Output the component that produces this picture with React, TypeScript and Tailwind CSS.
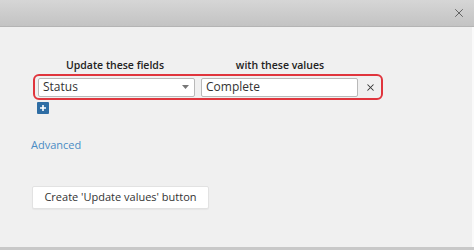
import { X } from 'lucide-react';

export default function App() {
  return (
    <div className="w-[474px] h-[250px] flex flex-col bg-[#f0f0f0] font-['Open_Sans',sans-serif] text-[11px] text-[#333] overflow-hidden">
      {/* title bar */}
      <div className="h-[27px] shrink-0 flex items-center justify-end pr-[8px] bg-gradient-to-b from-[#d6d6d6] to-[#c3c3c3] border-b border-[#b4b4b4]">
        <X className="w-[14px] h-[14px] text-[#555]" strokeWidth={1.5} />
      </div>

      <div className="flex-1 flex flex-col pl-[31px] pt-[31px] border-r-2 border-[#fafafa]">
        <div className="flex pl-[4px] font-semibold text-[10.5px] text-[#222] leading-[14px]">
          <div className="w-[160px] text-center">Update these fields</div>
          <div className="w-[170px] text-center">with these values</div>
        </div>

        <div className="mt-[2px] ml-[2px] w-[350px] h-[26px] flex items-center pl-[3px] border-2 border-[#e0353d] rounded-[6px]">
          <div className="w-[157px] h-[19px] flex items-center justify-between pl-[4px] pr-[5px] bg-white border border-[#b9b9b9] rounded-[2px]">
            <span className="text-[12px]">Status</span>
            <svg width="7" height="4" viewBox="0 0 7 4">
              <path d="M0 0h7L3.5 4z" fill="#777" />
            </svg>
          </div>
          <div className="ml-[6px] w-[157px] h-[19px] flex items-center pl-[4px] bg-white border border-[#b9b9b9] rounded-[2px]">
            <span className="text-[12px]">Complete</span>
          </div>
          <X className="ml-[7px] w-[11px] h-[11px] text-[#333]" strokeWidth={2.2} />
        </div>

        <div className="mt-[2px] ml-[6px] w-[12px] h-[12px] flex items-center justify-center bg-[#2e6da4] rounded-[1px]">
          <svg width="8" height="8" viewBox="0 0 8 8">
            <path d="M4 1v6M1 4h6" stroke="#fff" strokeWidth="1.6" />
          </svg>
        </div>

        <a className="mt-[24px] text-[#4a8cc4] leading-[14px]">Advanced</a>

        <button className="mt-[34px] ml-[1px] w-[177px] h-[23px] bg-white border border-[#e2e2e2] rounded-[2px] text-[#333] text-[11px] shadow-[0_1px_1px_rgba(0,0,0,0.04)]">
          Create 'Update values' button
        </button>
      </div>

      <div className="h-[3px] shrink-0 bg-[#c8c8c8]" />
    </div>
  );
}
